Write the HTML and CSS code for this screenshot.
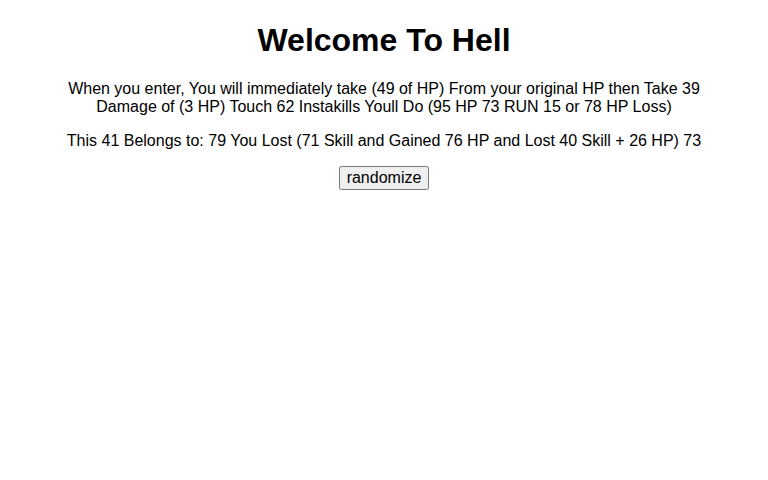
FILE: index.html
```html
<!DOCTYPE html>
<html lang="en">
<head>
<meta charset="utf-8">
<title>Welcome To Hell</title>
<link rel="stylesheet" href="styles.css">
</head>
<body>
<main class="page">
  <h1 class="title">Welcome To Hell</h1>
  <p class="line">When you enter, You will immediately take (49 of HP) From your original HP then Take 39 Damage of (3 HP) Touch 62 Instakills Youll Do (95 HP 73 RUN 15 or 78 HP Loss)</p>
  <p class="line">This 41 Belongs to: 79 You Lost (71 Skill and Gained 76 HP and Lost 40 Skill + 26 HP) 73</p>
  <button class="roll" type="button">randomize</button>
</main>
</body>
</html>
```

FILE: styles.css
```css
body {
  margin: 8px;
  font-family: "Liberation Sans", Arial, sans-serif;
  color: #000;
  background: #fff;
}

.page {
  max-width: 640px;
  margin: 0 auto;
  text-align: center;
}

.title {
  font-size: 32px;
  font-weight: bold;
  margin: 14px 0 21px;
}

.line {
  font-size: 16px;
  margin: 16px 0;
}

.roll {
  font-family: "Liberation Sans", Arial, sans-serif;
  font-size: 16px;
}
```
